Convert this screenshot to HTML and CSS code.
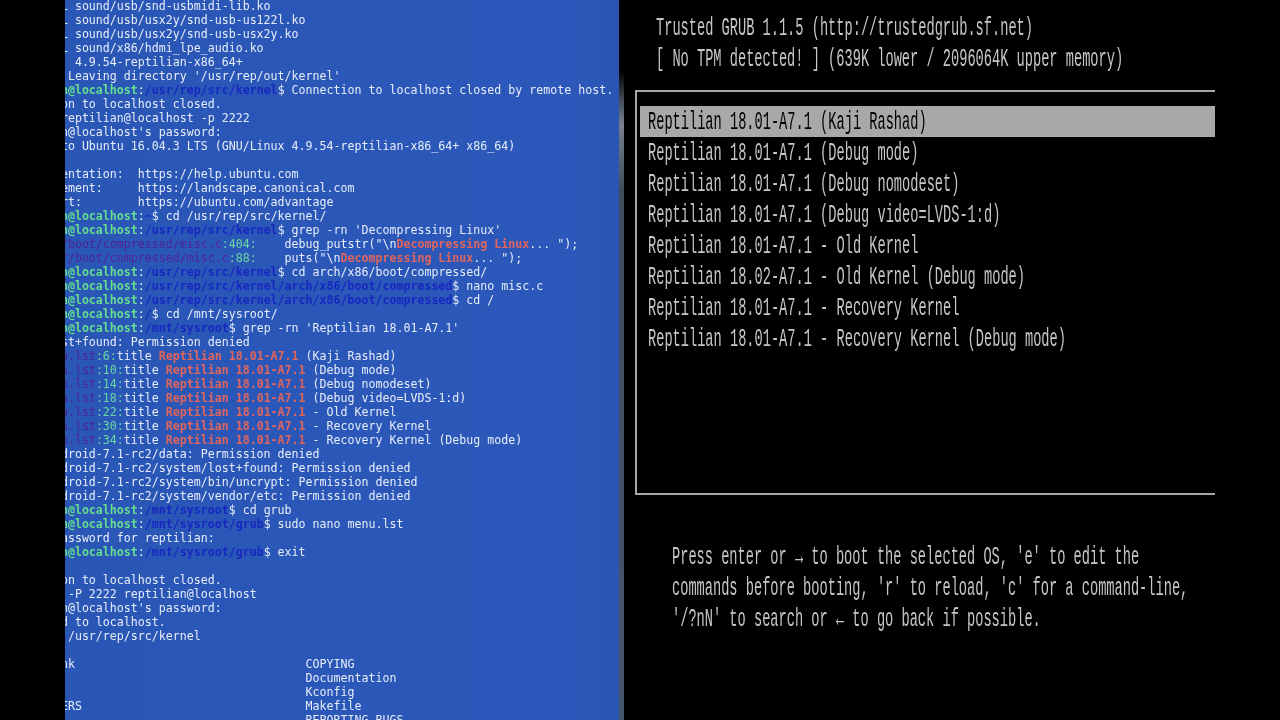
FILE: index.html
```html
<!DOCTYPE html>
<html lang="en">
<head>
<meta charset="utf-8">
<title>Terminal and Trusted GRUB menu</title>
<link rel="stylesheet" href="styles.css">
</head>
<body>
<main class="stage">
<section class="term">
<pre class="term-text">  INSTALL sound/usb/snd-usbmidi-lib.ko
  INSTALL sound/usb/usx2y/snd-usb-us122l.ko
  INSTALL sound/usb/usx2y/snd-usb-usx2y.ko
  INSTALL sound/x86/hdmi_lpe_audio.ko
  DEPMOD  4.9.54-reptilian-x86_64+
make[1]: Leaving directory '/usr/rep/out/kernel'
<b class="host">reptilian@localhost</b>:<b class="path">/usr/rep/src/kernel</b>$ Connection to localhost closed by remote host.
Connection to localhost closed.
        reptilian@localhost -p 2222
reptilian@localhost's password:
Welcome to Ubuntu 16.04.3 LTS (GNU/Linux 4.9.54-reptilian-x86_64+ x86_64)

 * Documentation:  https://help.ubuntu.com
 * Management:     https://landscape.canonical.com
 * Support:        https://ubuntu.com/advantage
<b class="host">reptilian@localhost</b>:<b class="path">~</b>$ cd /usr/rep/src/kernel/
<b class="host">reptilian@localhost</b>:<b class="path">/usr/rep/src/kernel</b>$ grep -rn 'Decompressing Linux'
<span class="file">arch/x86/boot/compressed/misc.c</span><span class="num">:404:</span>    debug_putstr("\n<b class="match">Decompressing Linux</b>... ");
<span class="file"> arch/avr/boot/compressed/misc.c</span><span class="num">:88:</span>    puts("\n<b class="match">Decompressing Linux</b>... ");
<b class="host">reptilian@localhost</b>:<b class="path">/usr/rep/src/kernel</b>$ cd arch/x86/boot/compressed/
<b class="host">reptilian@localhost</b>:<b class="path">/usr/rep/src/kernel/arch/x86/boot/compressed</b>$ nano misc.c
<b class="host">reptilian@localhost</b>:<b class="path">/usr/rep/src/kernel/arch/x86/boot/compressed</b>$ cd /
<b class="host">reptilian@localhost</b>:<b class="path">/</b>$ cd /mnt/sysroot/
<b class="host">reptilian@localhost</b>:<b class="path">/mnt/sysroot</b>$ grep -rn 'Reptilian 18.01-A7.1'
grep: lost+found: Permission denied
<span class="file">grub/menu.lst</span><span class="num">:6:</span>title <b class="match">Reptilian 18.01-A7.1</b> (Kaji Rashad)
<span class="file">grub/menu.lst</span><span class="num">:10:</span>title <b class="match">Reptilian 18.01-A7.1</b> (Debug mode)
<span class="file">grub/menu.lst</span><span class="num">:14:</span>title <b class="match">Reptilian 18.01-A7.1</b> (Debug nomodeset)
<span class="file">grub/menu.lst</span><span class="num">:18:</span>title <b class="match">Reptilian 18.01-A7.1</b> (Debug video=LVDS-1:d)
<span class="file">grub/menu.lst</span><span class="num">:22:</span>title <b class="match">Reptilian 18.01-A7.1</b> - Old Kernel
<span class="file">grub/menu.lst</span><span class="num">:30:</span>title <b class="match">Reptilian 18.01-A7.1</b> - Recovery Kernel
<span class="file">grub/menu.lst</span><span class="num">:34:</span>title <b class="match">Reptilian 18.01-A7.1</b> - Recovery Kernel (Debug mode)
grep: android-7.1-rc2/data: Permission denied
grep: android-7.1-rc2/system/lost+found: Permission denied
grep: android-7.1-rc2/system/bin/uncrypt: Permission denied
grep: android-7.1-rc2/system/vendor/etc: Permission denied
<b class="host">reptilian@localhost</b>:<b class="path">/mnt/sysroot</b>$ cd grub
<b class="host">reptilian@localhost</b>:<b class="path">/mnt/sysroot/grub</b>$ sudo nano menu.lst
[sudo] password for reptilian:
<b class="host">reptilian@localhost</b>:<b class="path">/mnt/sysroot/grub</b>$ exit

Connection to localhost closed.
sudo ssh -P 2222 reptilian@localhost
reptilian@localhost's password:
Connected to localhost.
      cd /usr/rep/src/kernel

kernel_lnk                                 COPYING
                                           Documentation
                                           Kconfig
MAINTAINERS                                Makefile
                                           REPORTING-BUGS</pre>
</section>
<div class="seam"></div>
<section class="grub">
<header class="grub-head">
<div class="grub-line"><span class="vga">Trusted GRUB 1.1.5 (http://trustedgrub.sf.net)</span></div>
<div class="grub-line"><span class="vga">[ No TPM detected! ] (639K lower / 2096064K upper memory)</span></div>
</header>
<div class="menu">
<div class="grub-line item selected"><span class="vga">Reptilian 18.01-A7.1 (Kaji Rashad)</span></div>
<div class="grub-line item"><span class="vga">Reptilian 18.01-A7.1 (Debug mode)</span></div>
<div class="grub-line item"><span class="vga">Reptilian 18.01-A7.1 (Debug nomodeset)</span></div>
<div class="grub-line item"><span class="vga">Reptilian 18.01-A7.1 (Debug video=LVDS-1:d)</span></div>
<div class="grub-line item"><span class="vga">Reptilian 18.01-A7.1 - Old Kernel</span></div>
<div class="grub-line item"><span class="vga">Reptilian 18.02-A7.1 - Old Kernel (Debug mode)</span></div>
<div class="grub-line item"><span class="vga">Reptilian 18.01-A7.1 - Recovery Kernel</span></div>
<div class="grub-line item"><span class="vga">Reptilian 18.01-A7.1 - Recovery Kernel (Debug mode)</span></div>
</div>
<footer class="help">
<div class="grub-line"><span class="vga">Press enter or → to boot the selected OS, 'e' to edit the</span></div>
<div class="grub-line"><span class="vga">commands before booting, 'r' to reload, 'c' for a command-line,</span></div>
<div class="grub-line"><span class="vga">'/?nN' to search or ← to go back if possible.</span></div>
</footer>
</section>
</main>
</body>
</html>
```
FILE: styles.css
```css
* { box-sizing: border-box; }

html, body {
  margin: 0;
  height: 100%;
  background: #000;
}

.stage {
  display: flex;
  width: 1280px;
  height: 720px;
  padding: 0 65px;
  overflow: hidden;
  background: #000;
}

/* Terminal side */
.term {
  flex: 0 0 554px;
  height: 720px;
  overflow: hidden;
  background: linear-gradient(90deg, #2a56b6 0%, #2b58ba 92%, #2a55b4 100%);
}

.term-text {
  margin: -1px 0 0 -60px;
  font-family: "DejaVu Sans Mono", monospace;
  font-size: 11.62px;
  line-height: 14px;
  color: #e6edf8;
  filter: blur(0.3px);
}

.term-text b { font-weight: 700; }
.host { color: #66dc90; }
.path { color: #1628c0; }
.match { color: #e0655c; }
.file { color: #4f2596; }
.num { color: #6ad8a0; }

.seam {
  flex: 0 0 5px;
  height: 720px;
  background: linear-gradient(180deg, #000 0, #000 70px, #4d5866 105px, #78818c 125px, #3f4c5e 190px, #46566c 720px);
}

/* GRUB side */
.grub {
  flex: 0 0 591px;
  height: 720px;
  padding-top: 12px;
  overflow: hidden;
  color: #c6c6c6;
  font-family: "Liberation Mono", monospace;
  font-size: 13.67px;
  filter: blur(0.25px);
}

.grub-line {
  height: 31px;
  line-height: 31px;
  white-space: pre;
}

.vga {
  display: inline-block;
  transform: translateY(1px) scaleY(1.95);
  transform-origin: 0 50%;
}

.grub-head { padding-left: 32px; }

.menu {
  height: 405px;
  margin: 16px 0 0 11px;
  padding: 14px 0 0 3px;
  border: 2px solid #a6a6a6;
  border-right: 0;
}

.item { padding-left: 8px; }

.selected {
  background: #a8a8a8;
  color: #000;
}

.help {
  margin-top: 46px;
  padding-left: 48px;
}
```
